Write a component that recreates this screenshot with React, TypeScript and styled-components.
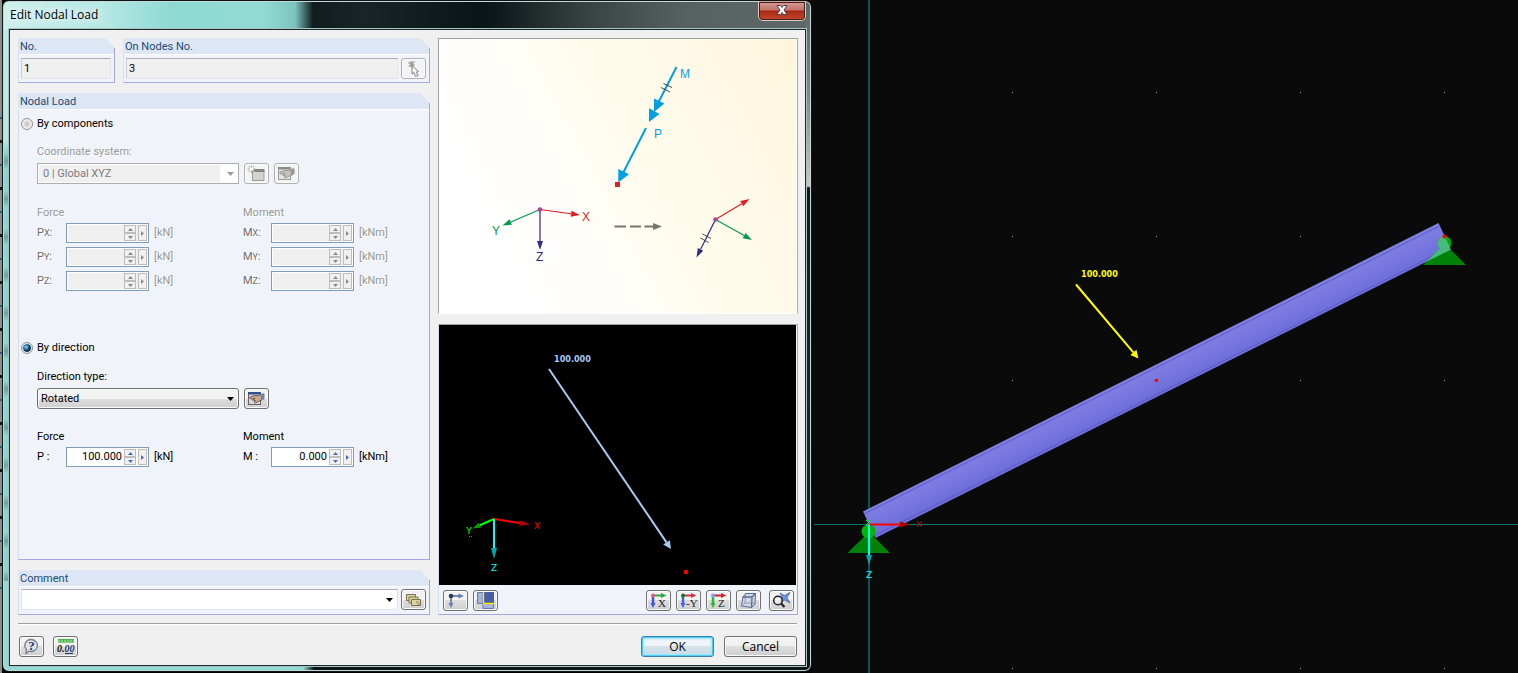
import React, { ReactNode } from 'react';
import styled, { createGlobalStyle, css } from 'styled-components';

const GlobalStyle = createGlobalStyle`
  *, *::before, *::after { box-sizing: border-box; }
  body {
    margin: 0;
    background: #0a0a0a;
    color: #000;
    font-family: Roboto, 'Liberation Sans', sans-serif;
    font-size: 11px;
    line-height: 16px;
  }
  button, input, select { font: inherit; color: inherit; margin: 0; }
  svg { display: block; }
`;

/* ---------- page and window frame ---------- */

const Page = styled.div`
  display: grid;
  grid-template-columns: minmax(0, 812fr) minmax(0, 706fr);
  min-height: 100vh;
`;

const Backdrop = styled.div`
  display: flex;
  padding: 0 0 1px 2px;
  background:
    repeating-linear-gradient(180deg, transparent 0 21px, #2b5f80 21px 23px, transparent 23px 44px, #1a1018 44px 47px) 0 96px / 2px 510px no-repeat,
    linear-gradient(90deg, #8d8d8b 2px, #000 2px);
`;

const DialogFrame = styled.section`
  flex: 1;
  display: flex;
  flex-direction: column;
  padding: 0 5px 5px 6px;
  border: 1px solid #0c1616;
  border-radius: 7px;
  box-shadow: inset 0 0 0 1px #c9d6d6;
  background:
    linear-gradient(180deg, #5a6464, #7d8787 90px, #c4c9c9 185px, #0c1b1d 187px, #16262a 60%, #0a1616) right top / 6px 100% no-repeat,
    linear-gradient(90deg, transparent 480px, #3a4444 590px, #566060 680px, #606969 100%) left top / 100% 29px no-repeat,
    linear-gradient(90deg, #cdf0ed, #b6e8e4 100px, #8ed9d4 170px, #92dad5 260px, #7cc4c0 292px, #101c1e 310px, #182426 360px, #081214 500px, #1a2526 100%) left top / 100% 29px no-repeat,
    linear-gradient(180deg, #c0ebe8, #b9e6e3 140px, transparent 150px) left top / 7px 100% no-repeat,
    repeating-linear-gradient(180deg, #88d6d1 0 12px, #6aa3a0 20px, #88d6d1 28px 38px) left 140px / 7px 440px no-repeat,
    linear-gradient(90deg, #8fdcd7 300px, #0c1818 311px);
`;

const TitleBar = styled.header`
  display: flex;
  justify-content: space-between;
  align-items: flex-start;
  height: 28px;
  padding-left: 1px;
`;

const Title = styled.h1`
  margin: 0;
  font: 400 12px/28px 'Open Sans', 'Noto Sans', sans-serif;
  text-shadow: 0 0 8px #fff, 0 0 8px #fff;
`;

const CloseButton = styled.button`
  display: grid;
  place-items: center;
  width: 48px;
  height: 20px;
  padding: 0 0 1px;
  border: 1px solid #e2c4c0;
  border-top: 0;
  border-radius: 0 0 5px 5px;
  outline: 1px solid #3c2422;
  outline-offset: -2px;
  background: linear-gradient(180deg, #d9a19b, #c4736a 9px, #a92a14 10px, #c2452a 18px);
`;

const Client = styled.form`
  flex: 1;
  display: flex;
  flex-direction: column;
  padding: 8px 7px 8px 8px;
  border: 1px solid #1b2a2a;
  background: #f0f0f0;
  box-shadow: 0 0 0 1px #a9c2c1;
`;

const Columns = styled.div`
  flex: 1;
  display: grid;
  grid-template-columns: minmax(0, 412fr) minmax(0, 360fr);
  gap: 8px;
`;

const Column = styled.div`
  display: flex;
  flex-direction: column;
  gap: 10px;
`;

const TopRow = styled.div`
  display: grid;
  grid-template-columns: minmax(0, 97fr) minmax(0, 307fr);
  gap: 8px;
`;

/* ---------- titled groups ---------- */

const GroupBox = styled.section<{ $grow?: boolean }>`
  display: flex;
  flex-direction: column;
  ${p => p.$grow && css`flex: 1;`}
`;

const GroupTitle = styled.h2`
  margin: 0;
  height: 16px;
  padding-left: 2px;
  background: linear-gradient(#a5a5e8, #a5a5e8) right bottom / 1px 6px no-repeat, #dce6f4;
  clip-path: polygon(0 0, calc(100% - 10px) 0, 100% 10px, 100% 100%, 0 100%);
  color: #1d4a75;
  font-size: 11px;
  font-weight: 400;
  line-height: 17px;
`;

const GroupBody = styled.div<{ $pad?: string }>`
  flex: 1;
  padding: ${p => p.$pad || '4px 3px 3px 2px'};
  border: solid #a5a5e8;
  border-width: 0 1px 1px 0;
  border-left: 1px solid #d5e0f8;
  box-shadow: inset 0 1px 0 #fff;
  background: #f0f4fa;
`;

const FieldRow = styled.div`
  display: flex;
  gap: 3px;
`;

function Group({ title, grow, pad, children }: { title: string; grow?: boolean; pad?: string; children: ReactNode }) {
  return (
    <GroupBox $grow={grow} aria-label={title}>
      <GroupTitle>{title}</GroupTitle>
      <GroupBody $pad={pad}>{children}</GroupBody>
    </GroupBox>
  );
}

/* ---------- controls ---------- */

const ReadonlyInput = styled.input`
  flex: 1;
  min-width: 0;
  width: 100%;
  height: 21px;
  padding: 0 2px;
  border: 1px solid #dfe4ee;
  border-top-color: #abadb3;
  border-left-color: #c8ccd6;
  background: #f0f0f0;
  outline: 0;
`;

const IconButton = styled.button`
  flex: none;
  display: grid;
  place-items: center;
  width: 25px;
  height: 21px;
  padding: 0;
  border: 1px solid #707070;
  border-radius: 3px;
  box-shadow: inset 0 0 0 1px #fbfbfb;
  background: linear-gradient(180deg, #f2f2f2 50%, #dddddd 50%, #cfcfcf);
  &:disabled {
    border-color: #adb2b5;
    background: #f4f4f4;
  }
`;

const RadioLabel = styled.label<{ $before?: number }>`
  display: flex;
  align-items: center;
  gap: 4px;
  height: 16px;
  margin-top: ${p => p.$before || 0}px;
`;

const Radio = styled.input`
  appearance: none;
  flex: none;
  width: 12px;
  height: 12px;
  border: 1px solid #8e8f8f;
  border-radius: 50%;
  background: radial-gradient(circle, #c8c8c8 1px, #ececec 4px);
  box-shadow: inset 0 0 0 1px #f4f4f4;
  &:checked {
    padding: 1px;
    background: radial-gradient(circle at 4px 4px, #9fe0f8, #2b86b8 2px, #0d2d48 4px);
    background-clip: content-box;
    box-shadow: inset 0 0 0 1px #e0e4e8;
  }
`;

const Indent = styled.div<{ $before: number; $dim?: boolean }>`
  margin: ${p => p.$before}px 0 0 16px;
  ${p => p.$dim && css`color: #989898; text-shadow: 1px 1px 0 #fff;`}
`;

const ControlLine = styled.div`
  display: flex;
  align-items: center;
  gap: 5px;
  margin-top: 3px;
`;

const SelectBox = styled.div<{ $wide?: boolean }>`
  position: relative;
  width: 202px;
  ${p => p.$wide && css`flex: 1; width: auto; min-width: 0;`}
`;

const Select = styled.select<{ $look: 'button' | 'off' | 'edit' }>`
  appearance: none;
  display: block;
  width: 100%;
  height: 21px;
  padding: 1px 20px 0 3px;
  border: 1px solid #707070;
  border-radius: 3px;
  outline: 0;
  background: linear-gradient(180deg, #f2f2f2 50%, #dddddd 50%, #cfcfcf);
  box-shadow: inset 0 0 0 1px #fbfbfb;
  ${p => p.$look === 'off' && css`
    padding-left: 5px;
    border-color: #abadb3;
    border-radius: 0;
    background: linear-gradient(90deg, #f0f0f0 calc(100% - 18px), #fff calc(100% - 18px));
    color: #7c7c7c;
    opacity: 1;
  `}
  ${p => p.$look === 'edit' && css`
    border-color: #abadb3 #e2e3ea #e3e9ef #e2e3ea;
    border-radius: 0;
    background: #fff;
  `}
`;

const Caret = styled.svg`
  position: absolute;
  right: 5px;
  top: 9px;
  pointer-events: none;
`;

const LoadGrid = styled.div`
  display: grid;
  grid-template-columns: 206px auto;
  justify-content: start;
`;

const Quantity = styled.fieldset`
  display: flex;
  flex-direction: column;
  gap: 4px;
  min-width: 0;
  margin: 0;
  padding: 0;
  border: 0;
`;

const QuantityName = styled.legend`
  padding: 0;
  margin-bottom: 2px;
`;

const QuantityRow = styled.div`
  display: flex;
  align-items: center;
`;

const QuantityLabel = styled.label<{ $off?: boolean; $short?: boolean }>`
  width: ${p => (p.$short ? 28 : 29)}px;
  white-space: pre;
  color: ${p => (p.$off ? '#6e6e6e' : '#000')};
  small { font-size: 9px; }
`;

const SpinBox = styled.div<{ $off?: boolean }>`
  display: flex;
  gap: 2px;
  width: 83px;
  height: 20px;
  padding: 1px;
  border: 1px solid #7f9db9;
  background: ${p => (p.$off ? '#f0f0f0' : '#fff')};
  box-shadow: inset 0 0 0 1px #fff;
  color: ${p => (p.$off ? '#8a8a8a' : '#4a68c0')};
`;

const SpinInput = styled.input`
  flex: 1;
  min-width: 0;
  padding: 0;
  border: 0;
  background: transparent;
  text-align: right;
  color: #000;
  outline: 0;
`;

const SpinPair = styled.div`
  display: grid;
  grid-template-rows: 1fr 1fr;
  width: 12px;
`;

const SpinButton = styled.button`
  display: grid;
  place-items: center;
  padding: 0;
  border: 1px solid #bdbdbd;
  background: #f0f0f0;
  color: inherit;
`;

const SpinMore = styled(SpinButton)`
  width: 9px;
`;

const Unit = styled.span`
  margin-left: 5px;
`;

function Spin({ id, value, off }: { id: string; value?: string; off?: boolean }) {
  return (
    <SpinBox $off={off}>
      <SpinInput id={id} defaultValue={value} disabled={off} />
      <SpinPair>
        <SpinButton type="button" disabled={off} aria-label="Increase">
          <svg width="5" height="3"><path d="M0 3L2.500 0L5 3Z" fill="currentColor" /></svg>
        </SpinButton>
        <SpinButton type="button" disabled={off} aria-label="Decrease">
          <svg width="5" height="3"><path d="M0 0L2.500 3L5 0Z" fill="currentColor" /></svg>
        </SpinButton>
      </SpinPair>
      <SpinMore type="button" disabled={off} aria-label="More">
        <svg width="3" height="5"><path d="M0 0L3 2.500L0 5Z" fill="currentColor" /></svg>
      </SpinMore>
    </SpinBox>
  );
}

function Component({ letter, axis, unit }: { letter: string; axis: string; unit: string }) {
  const id = letter + axis;
  return (
    <QuantityRow>
      <QuantityLabel htmlFor={id} $off $short={letter === 'M'}>{letter}<small>{axis}</small>:</QuantityLabel>
      <Spin id={id} off />
      <Unit>{unit}</Unit>
    </QuantityRow>
  );
}

/* ---------- previews ---------- */

const Picture = styled.div`
  height: 276px;
  border: 1px solid #a0a0a0;
  border-right-color: #a5a5e8;
  border-bottom-color: #fff;
  box-shadow: inset -1px 0 0 #fff;
  background: linear-gradient(62deg, #ffffff 20%, #fffdf8 40%, #fffcec 58%, #fff8e6 78%, #fff6dc);
`;

const ModelPanel = styled.div`
  flex: 1;
  display: flex;
  flex-direction: column;
  border: 1px solid #a5a5e8;
  border-top-color: #a0a0a0;
  border-left-color: #d5e0f8;
  background: #f0f4fa;
`;

const ModelView = styled.div`
  flex: 1;
  margin-right: 1px;
  background: #000;
  svg { min-height: 260px; }
`;

const ViewTools = styled.div`
  display: flex;
  justify-content: space-between;
  padding: 5px 3px 3px 4px;
`;

const ToolSet = styled.div<{ $last?: boolean }>`
  display: flex;
  gap: 5px;
  ${p => p.$last && css`
    button:last-child { margin-left: 3px; }
  `}
`;

/* ---------- footer ---------- */

const Footer = styled.footer`
  display: flex;
  justify-content: space-between;
  margin: 8px 1px 0 0;
  padding: 12px 0 0 1px;
  border-top: 1px solid #a0a0a0;
  box-shadow: inset 0 1px 0 #fff;
`;

const FooterSet = styled.div<{ $gap: number }>`
  display: flex;
  gap: ${p => p.$gap}px;
`;

const PushButton = styled.button<{ $primary?: boolean }>`
  width: 73px;
  height: 21px;
  padding: 0;
  border: 1px solid #707070;
  border-radius: 3px;
  box-shadow: inset 0 0 0 1px #fbfbfb;
  background: linear-gradient(180deg, #f2f2f2 50%, #dddddd 50%, #cfcfcf);
  font: 12px/18px 'Open Sans', 'Noto Sans', sans-serif;
  ${p => p.$primary && css`
    border-color: #3c7fb1;
    box-shadow: inset 0 0 0 1px #48d0f4, inset 0 0 2px 2px #a8e4f8;
    background: linear-gradient(180deg, #eef4f7 50%, #d4e2ea 50%, #cbdbe4);
  `}
`;

/* ---------- drawing helpers ---------- */

type ArrowProps = { x1: number; y1: number; x2: number; y2: number; color: string; head?: string; w?: number; len?: number; half?: number };

function Arrow({ x1, y1, x2, y2, color, head, w = 1.5, len = 9, half = 3 }: ArrowProps) {
  const d = Math.hypot(x2 - x1, y2 - y1);
  const ux = (x2 - x1) / d;
  const uy = (y2 - y1) / d;
  const bx = x2 - ux * len;
  const by = y2 - uy * len;
  return (
    <g>
      <line x1={x1} y1={y1} x2={bx} y2={by} stroke={color} strokeWidth={w} />
      <polygon points={`${x2},${y2} ${bx - uy * half},${by + ux * half} ${bx + uy * half},${by - ux * half}`} fill={head || color} />
    </g>
  );
}

const Glyph = styled.text`
  font: 12px 'Liberation Sans', sans-serif;
`;

const AxisName = styled.text`
  font: 9px 'DejaVu Sans', sans-serif;
  text-anchor: middle;
`;

const LoadValue = styled.text`
  font: bold 9px 'DejaVu Sans Condensed', 'DejaVu Sans', sans-serif;
`;

function SymbolPicture() {
  return (
    <svg width="100%" height="100%" viewBox="439 39 358 274" role="img" aria-label="Rotated nodal load">
      <g fill="#009fe3" stroke="none">
        <path d="M676.500 67L655 109M646 128L621 177" stroke="#009fe3" strokeWidth="2" />
        <path d="M654 98.500L664.500 103.500L654 112ZM649 108.300L659.500 114L649 122ZM618.300 169L629 174.300L618.300 182.500Z" />
        <Glyph x="680" y="78">M</Glyph>
        <Glyph x="654" y="138">P</Glyph>
      </g>
      <path d="M661 87.500L670 92M663.500 83.500L672 87.500" stroke="#333" strokeWidth="0.900" />
      <rect x="615" y="182" width="5" height="5" fill="#e31e24" />

      <Arrow x1={540} y1={209.500} x2={580} y2={215} color="#e31e24" w={1.2} />
      <Arrow x1={540} y1={209.500} x2={502.500} y2={225.500} color="#009a4e" w={1.2} />
      <Arrow x1={540} y1={209.500} x2={540} y2={250} color="#8078b4" head="#322b85" w={2} />
      <circle cx="540" cy="209.500" r="2.300" fill="#b0468a" />
      <Glyph x="582" y="221" fill="#e31e24">X</Glyph>
      <Glyph x="492" y="235" fill="#009a4e">Y</Glyph>
      <Glyph x="536" y="261" fill="#322b85">Z</Glyph>

      <path d="M614.500 226.500H626M630 226.500H641M644.500 226.500H654" stroke="#777570" strokeWidth="2" />
      <path d="M653 223L662 226.500L653 230Z" fill="#777570" />

      <Arrow x1={715.500} y1={219.500} x2={749.500} y2={199} color="#e31e24" w={1.2} />
      <Arrow x1={715.500} y1={219.500} x2={752} y2={240} color="#009a4e" w={1.2} />
      <Arrow x1={715.500} y1={219.500} x2={696.500} y2={257.500} color="#322b85" w={1.2} />
      <circle cx="715.500" cy="219.500" r="2.300" fill="#b0468a" />
      <path d="M700.500 238L708.500 242.500M702.500 234L711 238.500" stroke="#333" strokeWidth="0.900" />
    </svg>
  );
}

function ModelPicture() {
  return (
    <svg width="100%" height="100%" viewBox="439 325 357 260" role="img" aria-label="Load preview">
      <LoadValue x="554" y="362" fill="#a8cbf4">100.000</LoadValue>
      <Arrow x1={549} y1={369} x2={671} y2={549} color="#a8cbf4" w={2} len={8} half={4} />
      <circle cx="686" cy="572" r="2.300" fill="#f00" />
      <Arrow x1={494} y1={519} x2={530} y2={524.500} color="#f00" head="#b80000" w={2} len={10} half={2.800} />
      <Arrow x1={494} y1={519} x2={472.500} y2={528.500} color="#0f0" head="#0a9a0a" w={2} len={8} half={2.800} />
      <Arrow x1={494} y1={519} x2={494} y2={559} color="#0ff" head="#00a8a8" w={2} len={11} half={3} />
      <AxisName x="537" y="529" fill="#f00">X</AxisName>
      <AxisName x="469" y="534" fill="#0f0">Y</AxisName>
      <AxisName x="494" y="571" fill="#0ff">Z</AxisName>
      <path d="M469 536.500h1M471 536.500h1" stroke="#0c0" />
    </svg>
  );
}

const Scene = styled.main`
  display: flex;
  background: #0a0a0a;
`;

const GRID_X = [1012, 1156, 1300, 1444];
const GRID_Y = [92, 236, 380, 668];

function ModelScene() {
  return (
    <svg width="100%" height="100%" viewBox="812 0 706 673" preserveAspectRatio="xMinYMin slice" role="img" aria-label="Structural model">
      <defs>
        <linearGradient id="beam" gradientUnits="userSpaceOnUse" x1="1150" y1="364" x2="1164" y2="392">
          <stop offset="0" stopColor="#8282e3" />
          <stop offset="1" stopColor="#6e6edb" />
        </linearGradient>
        <clipPath id="beamArea"><polygon points="863,511.500 1438.500,223 1451,249.500 875.500,538" /></clipPath>
      </defs>
      {GRID_Y.flatMap(y => GRID_X.map(x => <rect key={`${x}-${y}`} x={x} y={y} width="1" height="1" fill="#a8a8a8" />))}
      <path d="M869 0V673" stroke="#0d5656" strokeWidth="2" />
      <path d="M814 524.500H1518" stroke="#0d7474" />
      <polygon points="863,511.500 1438.500,223 1451,249.500 875.500,538" fill="url(#beam)" />
      <path d="M864 514L1439.500 226M874.500 535.500L1450 247.500" stroke="#5a58cf" />

      <g fill="#008208">
        <path d="M869 532L890 553H847.500Z" />
        <path d="M1444.500 243.500L1466 265H1423Z" />
      </g>
      <circle cx="868.500" cy="531.500" r="7" fill="#00b400" />
      <circle cx="1444.500" cy="243" r="7" fill="#00a808" />
      <g clipPath="url(#beamArea)" fill="#48bb7c">
        <path d="M1444.500 243.500L1466 265H1423Z" />
        <circle cx="1444.500" cy="243" r="7" />
      </g>
      <path d="M1444.500 234.500v4M1442.500 236.500h4" stroke="#f00" strokeWidth="2" />

      <path d="M866 520L871 525M871 520L866 525" stroke="#0f0" />
      <Arrow x1={869} y1={524.500} x2={910} y2={524.500} color="#f00" head="#a80000" w={2} len={10} half={3} />
      <Arrow x1={869} y1={524.500} x2={869} y2={565} color="#0ff" head="#00a8a8" w={2} len={10} half={3} />
      <path d="M917 521L922 527M922 521L917 527" stroke="#b01414" />
      <AxisName x="869" y="578" fill="#0ff">Z</AxisName>

      <LoadValue x="1081" y="277" fill="#ff0">100.000</LoadValue>
      <Arrow x1={1076} y1={284.500} x2={1138.500} y2={358.500} color="#ff0" w={2} len={8} half={4} />
      <circle cx="1156.500" cy="380.500" r="1.800" fill="#f00" />
    </svg>
  );
}

/* ---------- icons ---------- */

const PickIcon = () => (
  <svg width="17" height="17" viewBox="0 0 17 17" fill="none">
    <path d="M3.500 2.500l6 3M9.500 1.500L4 6.500M6.500 1v6.500" stroke="#a3a196" strokeWidth="1.600" />
    <path d="M7 5.500l6.500 6-2 .5 1.500 3.500-2.500 1-1.500-4-2 1.500Z" fill="#f2f2f0" stroke="#858583" />
  </svg>
);

const NewIcon = () => (
  <svg width="19" height="17" viewBox="0 0 19 17">
    <path d="M5.500 5.500h11.500v10H5.500Z" fill="#d4d4ce" stroke="#9a9a96" />
    <path d="M7 4h10.500v3H7Z" fill="#868686" />
    <path d="M4.500 0v8M0.500 4h8M1.500 1l6 6M7.500 1l-6 6" stroke="#a8a69c" />
    <circle cx="4.500" cy="4" r="1.800" fill="#fff" />
  </svg>
);

const EditIcon = ({ off }: { off?: boolean }) => (
  <svg width="19" height="15" viewBox="0 0 19 15">
    <rect x="1.500" y="1.500" width="12" height="12" fill={off ? '#e4e4e2' : '#d8d8dc'} stroke={off ? '#9c9c9a' : '#606066'} />
    <path d="M1 1h13v2.500H1Z" fill={off ? '#8c8c8c' : '#34508e'} />
    <path d="M2.500 6.500L6 4.800L11 4.500L14.500 3.500V9L11.500 10.500L8.500 12L7 11L8.500 9.500L5.500 9L8 7.500L3.500 8Z" fill={off ? '#c4c2be' : '#c9a68a'} stroke={off ? '#8a8a88' : '#5e4a3c'} strokeWidth="0.800" />
    <path d="M13.500 3.500l3-1.500 1 1v5l-3.500 2Z" fill={off ? '#969694' : '#6d84ac'} />
  </svg>
);

const CardsIcon = () => (
  <svg width="17" height="14" viewBox="0 0 17 14" fill="#dcd3a4" stroke="#7b7448">
    <path d="M1.500 1.500h9v6h-9Z" />
    <path d="M4 4h9v6H4Z" />
    <path d="M6.500 6.500h9v6h-9Z" />
    <path d="M11 9h3v3Z" fill="#fff" strokeWidth="0.700" />
  </svg>
);

const HelpIcon = () => (
  <svg width="17" height="17" viewBox="0 0 17 17">
    <path d="M8.500 1.500a6.500 6 0 1 1-2.500 11.700L3 15.500l.5-4A6.300 6 0 0 1 8.500 1.500Z" fill="#dfe3ea" stroke="#7b7f88" strokeWidth="1.300" />
    <text x="8.500" y="12" textAnchor="middle" fill="#1f3d80" fontFamily="Liberation Serif, serif" fontSize="13" fontWeight="700">?</text>
  </svg>
);

const DigitsIcon = () => (
  <svg width="19" height="17" viewBox="0 0 19 17">
    <path d="M2 1h16v4H2Z" fill="#7fd07a" />
    <path d="M2 1.500h16M4.500 1v3M7.500 1v3M10.500 1v3M13.500 1v3M16.500 1v3" stroke="#4ea653" strokeWidth="0.800" />
    <path d="M9 15.500h8" stroke="#1e2f6b" />
    <text x="1" y="14" fill="#111" fontFamily="Liberation Serif, serif" fontSize="10" fontStyle="italic" fontWeight="700">0.<tspan fill="#22387c">00</tspan></text>
  </svg>
);

const AxesIcon = () => (
  <svg width="19" height="17" viewBox="0 0 19 17">
    <path d="M5 4h9M5 4v8" stroke="#7289b8" strokeWidth="2" />
    <path d="M12.500 1.500L18 4L12.500 6.500ZM2.500 11L5 16L7.500 11Z" fill="#6880b0" />
    <circle cx="5" cy="4" r="2.300" fill="#2c3a5a" />
  </svg>
);

const LayoutIcon = () => (
  <svg width="17" height="17" viewBox="0 0 17 17">
    <path d="M0.500 0.500H6V11.500H0.500ZM6 11.500H16.500V16.500H6Z" fill="#a4b4dc" stroke="#6478b0" />
    <path d="M6 0H17V11H6Z" fill="#4a5ea4" />
    <path d="M6.500 0V11.500H17" fill="none" stroke="#ffee00" strokeWidth="1.300" />
  </svg>
);

type ViewIconProps = { name: string; across: string; down: string; dot: string };

const ViewIcon = ({ name, across, down, dot }: ViewIconProps) => (
  <svg width="19" height="17" viewBox="0 0 19 17">
    <path d="M4 3.500h9" stroke={across} strokeWidth="2" />
    <path d="M12 1L17.500 3.500L12 6Z" fill={across} />
    <path d="M4 4v8" stroke={down} strokeWidth="2.500" />
    <path d="M1.500 11L4 16L6.500 11Z" fill={down} />
    <circle cx="4" cy="3.500" r="2" fill={dot} />
    <text x={name.length > 1 ? 7 : 9} y="15" fill="#222" fontFamily="Liberation Serif, serif" fontSize="11">{name}</text>
  </svg>
);

const CubeIcon = () => (
  <svg width="17" height="17" viewBox="0 0 17 17" stroke="#5c6c90" strokeLinejoin="round">
    <path d="M1.500 14L3 5L5.500 1.500H15.500L15 12L11.500 15.500Z" fill="#d0d8e8" />
    <path d="M5.500 1.500L5 11H15M5 11L1.500 14" fill="none" stroke="#8f9dbb" />
    <path d="M2.500 5H12L11.500 15.500M12 5L15.500 1.500" fill="none" strokeWidth="1.300" />
  </svg>
);

const ZoomIcon = () => (
  <svg width="19" height="17" viewBox="0 0 19 17" fill="none">
    <path d="M8 1l4.500 2.500L18 0.500l-3 5L18 11L12.500 8L8 10.500L10.500 6Z" fill="#6f93d8" stroke="#3c5ca0" strokeWidth="0.700" />
    <circle cx="6" cy="8.500" r="4.300" fill="#eef0f4" fillOpacity="0.700" stroke="#222" strokeWidth="1.500" />
    <path d="M9 11.500l3.500 3.500" stroke="#222" strokeWidth="2.300" />
  </svg>
);

const CloseIcon = () => (
  <svg width="12" height="10" viewBox="0 0 12 10">
    <path d="M1 .5h3.500L6 2.500L7.500 .5H11L8 5l3 4.500H7.500L6 7.500L4.500 9.500H1L4 5Z" fill="#fff" stroke="#45424e" />
  </svg>
);

const CaretMark = ({ off }: { off?: boolean }) => (
  <Caret width="7" height="4"><path d="M0 0H7L3.500 4Z" fill={off ? '#9a9a9a' : '#000'} /></Caret>
);

/* ---------- app ---------- */

export default function App() {
  return (
    <>
      <GlobalStyle />
      <Page>
        <Backdrop>
          <DialogFrame aria-label="Edit Nodal Load">
            <TitleBar>
              <Title>Edit Nodal Load</Title>
              <CloseButton type="button" aria-label="Close"><CloseIcon /></CloseButton>
            </TitleBar>
            <Client onSubmit={e => e.preventDefault()}>
              <Columns>
                <Column>
                  <TopRow>
                    <Group title="No.">
                      <FieldRow><ReadonlyInput aria-label="No." defaultValue="1" readOnly /></FieldRow>
                    </Group>
                    <Group title="On Nodes No.">
                      <FieldRow>
                        <ReadonlyInput aria-label="On Nodes No." defaultValue="3" readOnly />
                        <IconButton type="button" disabled aria-label="Pick nodes"><PickIcon /></IconButton>
                      </FieldRow>
                    </Group>
                  </TopRow>

                  <Group title="Nodal Load" grow pad="7px 0 0 2px">
                    <RadioLabel><Radio type="radio" name="mode" />By components</RadioLabel>
                    <Indent $before={12} $dim>
                      <label htmlFor="system">Coordinate system:</label>
                      <ControlLine>
                        <SelectBox>
                          <Select id="system" $look="off" disabled><option>0 | Global XYZ</option></Select>
                          <CaretMark off />
                        </SelectBox>
                        <IconButton type="button" disabled aria-label="New coordinate system"><NewIcon /></IconButton>
                        <IconButton type="button" disabled aria-label="Edit coordinate system"><EditIcon off /></IconButton>
                      </ControlLine>
                    </Indent>
                    <Indent $before={21} $dim>
                      <LoadGrid>
                        <Quantity>
                          <QuantityName>Force</QuantityName>
                          {['X', 'Y', 'Z'].map(a => <Component key={a} letter="P" axis={a} unit="[kN]" />)}
                        </Quantity>
                        <Quantity>
                          <QuantityName>Moment</QuantityName>
                          {['X', 'Y', 'Z'].map(a => <Component key={a} letter="M" axis={a} unit="[kNm]" />)}
                        </Quantity>
                      </LoadGrid>
                    </Indent>

                    <RadioLabel $before={49}><Radio type="radio" name="mode" defaultChecked />By direction</RadioLabel>
                    <Indent $before={13}>
                      <label htmlFor="direction">Direction type:</label>
                      <ControlLine>
                        <SelectBox>
                          <Select id="direction" $look="button"><option>Rotated</option></Select>
                          <CaretMark />
                        </SelectBox>
                        <IconButton type="button" aria-label="Edit direction"><EditIcon /></IconButton>
                      </ControlLine>
                    </Indent>
                    <Indent $before={20}>
                      <LoadGrid>
                        <Quantity>
                          <QuantityName>Force</QuantityName>
                          <QuantityRow>
                            <QuantityLabel htmlFor="P">P :</QuantityLabel>
                            <Spin id="P" value="100.000" />
                            <Unit>[kN]</Unit>
                          </QuantityRow>
                        </Quantity>
                        <Quantity>
                          <QuantityName>Moment</QuantityName>
                          <QuantityRow>
                            <QuantityLabel htmlFor="M" $short>M :</QuantityLabel>
                            <Spin id="M" value="0.000" />
                            <Unit>[kNm]</Unit>
                          </QuantityRow>
                        </Quantity>
                      </LoadGrid>
                    </Indent>
                  </Group>

                  <Group title="Comment" pad="3px 3px 4px 2px">
                    <FieldRow>
                      <SelectBox $wide>
                        <Select $look="edit" aria-label="Comment"><option></option></Select>
                        <CaretMark />
                      </SelectBox>
                      <IconButton type="button" aria-label="Comment library"><CardsIcon /></IconButton>
                    </FieldRow>
                  </Group>
                </Column>

                <Column>
                  <Picture><SymbolPicture /></Picture>
                  <ModelPanel>
                    <ModelView><ModelPicture /></ModelView>
                    <ViewTools>
                      <ToolSet>
                        <IconButton type="button" aria-label="Show axes"><AxesIcon /></IconButton>
                        <IconButton type="button" aria-label="Show whole model"><LayoutIcon /></IconButton>
                      </ToolSet>
                      <ToolSet $last>
                        <IconButton type="button" aria-label="View in X"><ViewIcon name="X" across="#1fb040" down="#3a57e8" dot="#e85a7a" /></IconButton>
                        <IconButton type="button" aria-label="View in -Y"><ViewIcon name="-Y" across="#d83048" down="#4a62e0" dot="#127a28" /></IconButton>
                        <IconButton type="button" aria-label="View in Z"><ViewIcon name="Z" across="#d02030" down="#28b838" dot="#88a0e8" /></IconButton>
                        <IconButton type="button" aria-label="Isometric view"><CubeIcon /></IconButton>
                        <IconButton type="button" aria-label="Zoom all"><ZoomIcon /></IconButton>
                      </ToolSet>
                    </ViewTools>
                  </ModelPanel>
                </Column>
              </Columns>

              <Footer>
                <FooterSet $gap={9}>
                  <IconButton type="button" aria-label="Help"><HelpIcon /></IconButton>
                  <IconButton type="button" aria-label="Units and decimal places"><DigitsIcon /></IconButton>
                </FooterSet>
                <FooterSet $gap={10}>
                  <PushButton type="submit" $primary>OK</PushButton>
                  <PushButton type="button">Cancel</PushButton>
                </FooterSet>
              </Footer>
            </Client>
          </DialogFrame>
        </Backdrop>
        <Scene><ModelScene /></Scene>
      </Page>
    </>
  );
}
